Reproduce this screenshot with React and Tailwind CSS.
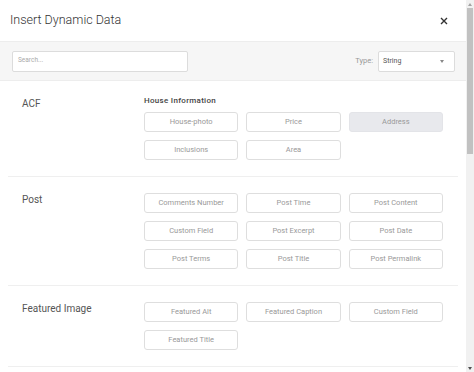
import React from "react";

const sections = [
  {
    title: "ACF",
    heading: "House Information",
    items: ["House-photo", "Price", "Address", "Inclusions", "Area"],
    active: "Address",
  },
  {
    title: "Post",
    items: [
      "Comments Number",
      "Post Time",
      "Post Content",
      "Custom Field",
      "Post Excerpt",
      "Post Date",
      "Post Terms",
      "Post Title",
      "Post Permalink",
    ],
  },
  {
    title: "Featured Image",
    items: ["Featured Alt", "Featured Caption", "Custom Field", "Featured Title"],
  },
];

const Section = ({ title, heading, items, active }) => (
  <div className="mx-[8px] flex border-b border-[#efefef] pb-[16px] pt-[16px]">
    <div className="w-[136px] pl-[14px] text-[10px] leading-[14px] text-[#555]">{title}</div>
    <div className="flex-1">
      {heading && (
        <div className="mb-[5px] -mt-[2px] text-[8px] font-medium leading-[12px] tracking-[0.3px] text-[#444]">
          {heading}
        </div>
      )}
      <div className="grid w-[299px] grid-cols-3 gap-x-[8px] gap-y-[8px]">
        {items.map((it) => (
          <div
            key={it}
            className={`flex h-[20px] items-center justify-center rounded-[3px] border text-[7.5px] text-[#999] ${
              it === active ? "border-[#e3e4e8] bg-[#e8e9ed]" : "border-[#dedede] bg-white"
            }`}
          >
            {it}
          </div>
        ))}
      </div>
    </div>
  </div>
);

export default function App() {
  return (
    <div
      className="flex h-[372px] w-[474px] overflow-hidden bg-white"
      style={{ fontFamily: "Roboto, 'Liberation Sans', sans-serif" }}
    >
      <div className="flex w-[466px] flex-col">
        {/* header */}
        <div className="flex h-[41px] shrink-0 items-center justify-between pl-[10px] pr-[18px]">
          <span className="text-[12.5px] font-light text-[#333]">Insert Dynamic Data</span>
          <svg width="8" height="8" viewBox="0 0 8 8">
            <path d="M1 1L7 7M7 1L1 7" stroke="#333" strokeWidth="1.4" />
          </svg>
        </div>

        {/* toolbar */}
        <div className="flex h-[40px] shrink-0 items-center justify-between border-y border-[#ededed] bg-[#f6f6f6] pl-[12px] pr-[11px]">
          <div className="flex h-[21px] w-[176px] items-center rounded-[2px] border border-[#dcdcdc] bg-white px-[5px] text-[6.5px] text-[#aaa]">
            Search...
          </div>
          <div className="flex items-center">
            <span className="mr-[5px] text-[7.5px] text-[#999]">Type:</span>
            <div className="flex h-[21px] w-[77px] items-center justify-between rounded-[2px] border border-[#dcdcdc] bg-white pl-[4px] pr-[10px] text-[7px] text-[#555]">
              <span>String</span>
              <svg width="4" height="3" viewBox="0 0 4 3">
                <path d="M0 0H4L2 3Z" fill="#888" />
              </svg>
            </div>
          </div>
        </div>

        {/* content */}
        <div className="flex-1">
          {sections.map((s) => (
            <Section key={s.title} {...s} />
          ))}
        </div>
      </div>

      {/* scrollbar */}
      <div className="flex w-[8px] flex-col bg-[#f1f1f1]">
        <div className="flex h-[8px] items-center justify-center">
          <svg width="4" height="3" viewBox="0 0 4 3">
            <path d="M0 3H4L2 0Z" fill="#a3a3a3" />
          </svg>
        </div>
        <div className="mx-[1px] h-[146px] bg-[#c1c1c1]" />
        <div className="flex-1" />
        <div className="flex h-[8px] items-center justify-center">
          <svg width="4" height="3" viewBox="0 0 4 3">
            <path d="M0 0H4L2 3Z" fill="#505050" />
          </svg>
        </div>
      </div>
    </div>
  );
}
